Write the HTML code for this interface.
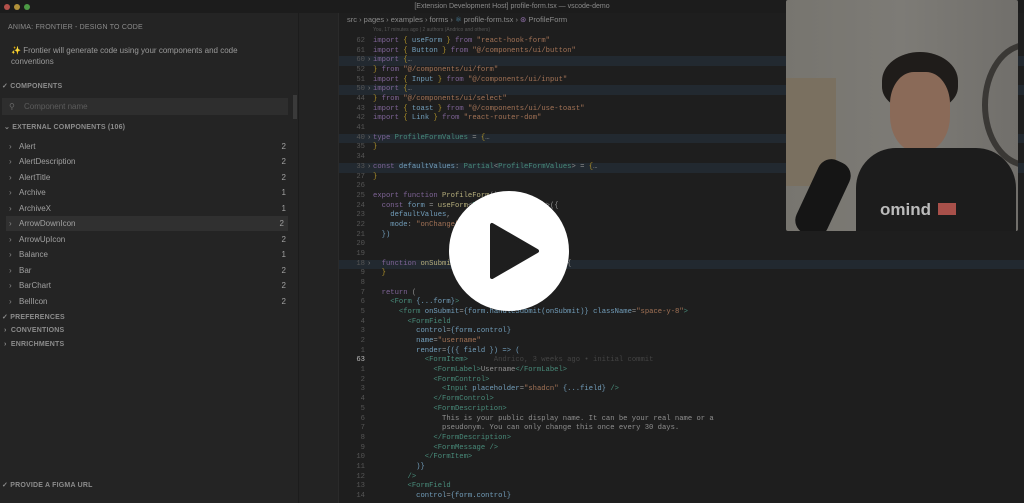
<!DOCTYPE html>
<html><head><meta charset="utf-8"><style>
*{margin:0;padding:0;box-sizing:border-box}
body{width:1024px;height:503px;overflow:hidden;background:#202020;font-family:"Liberation Sans",sans-serif;position:relative}
.title{position:absolute;left:0;top:0;width:1024px;height:13px;background:#1c1c1c;color:#8a8a8a;font-size:7px;text-align:center;line-height:13px}
.dot{position:absolute;top:4px;width:6px;height:6px;border-radius:50%}
.side{position:absolute;left:0;top:13px;width:298px;height:490px;background:#242424;color:#a0a0a0;font-size:8px}
.gap{position:absolute;left:298px;top:13px;width:40px;height:490px;background:#232323;border-left:1px solid #1c1c1c}
.ed{position:absolute;left:338px;top:13px;width:686px;height:490px;background:#1e1e1e;border-left:1px solid #2a2a2a}
.hdr{position:absolute;left:8px;font-size:7px;font-weight:bold;color:#8c8c8c;letter-spacing:.2px}
.row{position:absolute;left:0;width:290px;height:15px;line-height:15px;font-size:8px;color:#a0a0a0}
.row .c{position:absolute;left:9px;color:#888}
.row .n{position:absolute;left:19px}
.row .k{position:absolute;right:4px}
.code{position:absolute;left:0;top:0;font-family:"Liberation Mono",monospace;font-size:7.2px;white-space:pre}
.ln{position:absolute;width:686px;height:9.7px;line-height:9.7px}
.ln .no{position:absolute;left:0;width:26px;text-align:right;color:#555}
.ln .tx{position:absolute;left:34px;color:#8f8f8f}
.hl{background:#222930}
.kw{color:#7f6497}.fn{color:#b5ae7c}.st{color:#a37356}.ty{color:#488b7a}.vr{color:#729ebb}.br{color:#b39429}.tg{color:#488b7a}.at{color:#729ebb}
</style></head><body>
<div class="title">[Extension Development Host] profile-form.tsx — vscode-demo</div>
<div class="dot" style="left:4px;background:#b2504a"></div>
<div class="dot" style="left:14px;background:#b1913a"></div>
<div class="dot" style="left:24px;background:#4c9a45"></div>

<div class="side">
<div class="hdr" style="top:11px;font-weight:normal">ANIMA: FRONTIER - DESIGN TO CODE</div>
<div style="position:absolute;left:11px;top:32px;font-size:8px;color:#9a9a9a;line-height:11px;width:270px"><span style="color:#c9a52c">✨</span> Frontier will generate code using your components and code conventions</div>
<div class="hdr" style="top:69px;left:2px">✓ COMPONENTS</div>
<div style="position:absolute;left:2px;top:85px;width:286px;height:17px;background:#2e2e2e;color:#5c5c5c;font-size:8px;line-height:17px;padding-left:22px">Component name<span style="position:absolute;left:7px;top:0;color:#666">⚲</span></div>
<div style="position:absolute;left:293px;top:82px;width:4px;height:24px;background:#3a3a3a"></div>
<div class="hdr" style="top:110px;left:4px">⌄ EXTERNAL COMPONENTS (106)</div>
<div class="row" style="top:126px"><span class="c">›</span><span class="n">Alert</span><span class="k">2</span></div>
<div class="row" style="top:141px"><span class="c">›</span><span class="n">AlertDescription</span><span class="k">2</span></div>
<div class="row" style="top:157px"><span class="c">›</span><span class="n">AlertTitle</span><span class="k">2</span></div>
<div class="row" style="top:172px"><span class="c">›</span><span class="n">Archive</span><span class="k">1</span></div>
<div class="row" style="top:188px"><span class="c">›</span><span class="n">ArchiveX</span><span class="k">1</span></div>
<div class="row" style="top:203px;background:#303030;left:6px;width:282px"><span class="c" style="left:3px">›</span><span class="n" style="left:13px">ArrowDownIcon</span><span class="k">2</span></div>
<div class="row" style="top:219px"><span class="c">›</span><span class="n">ArrowUpIcon</span><span class="k">2</span></div>
<div class="row" style="top:234px"><span class="c">›</span><span class="n">Balance</span><span class="k">1</span></div>
<div class="row" style="top:250px"><span class="c">›</span><span class="n">Bar</span><span class="k">2</span></div>
<div class="row" style="top:265px"><span class="c">›</span><span class="n">BarChart</span><span class="k">2</span></div>
<div class="row" style="top:281px"><span class="c">›</span><span class="n">BellIcon</span><span class="k">2</span></div>
<div class="hdr" style="top:300px;left:2px">✓ PREFERENCES</div>
<div class="hdr" style="top:314px;left:4px">›&nbsp; CONVENTIONS</div>
<div class="hdr" style="top:328px;left:4px">›&nbsp; ENRICHMENTS</div>
<div class="hdr" style="top:468px;left:2px">✓ PROVIDE A FIGMA URL</div>
</div>
<div class="gap"></div>

<div class="ed">
<div style="position:absolute;left:8px;top:2px;font-size:7.5px;color:#8a8a8a">src › pages › examples › forms › <span style="color:#4f8fb0">⚛</span> profile-form.tsx › <span style="color:#8f6fa8">⊛</span> ProfileForm</div>
<div style="position:absolute;left:34px;top:14px;font-size:5px;color:#555">You, 17 minutes ago | 2 authors (Andrico and others)</div>
<div class="code" id="c"></div>
</div>

<script>
var L=[
["62",'<span class="kw">import</span> <span class="br">{</span> <span class="vr">useForm</span> <span class="br">}</span> <span class="kw">from</span> <span class="st">"react-hook-form"</span>'],
["61",'<span class="kw">import</span> <span class="br">{</span> <span class="vr">Button</span> <span class="br">}</span> <span class="kw">from</span> <span class="st">"@/components/ui/button"</span>'],
["60",'<span class="kw">import</span> <span class="br">{</span>…',1],
["52",'<span class="br">}</span> <span class="kw">from</span> <span class="st">"@/components/ui/form"</span>'],
["51",'<span class="kw">import</span> <span class="br">{</span> <span class="vr">Input</span> <span class="br">}</span> <span class="kw">from</span> <span class="st">"@/components/ui/input"</span>'],
["50",'<span class="kw">import</span> <span class="br">{</span>…',1],
["44",'<span class="br">}</span> <span class="kw">from</span> <span class="st">"@/components/ui/select"</span>'],
["43",'<span class="kw">import</span> <span class="br">{</span> <span class="vr">toast</span> <span class="br">}</span> <span class="kw">from</span> <span class="st">"@/components/ui/use-toast"</span>'],
["42",'<span class="kw">import</span> <span class="br">{</span> <span class="vr">Link</span> <span class="br">}</span> <span class="kw">from</span> <span class="st">"react-router-dom"</span>'],
["41",''],
["40",'<span class="kw">type</span> <span class="ty">ProfileFormValues</span> = <span class="br">{</span>…',1],
["35",'<span class="br">}</span>'],
["34",''],
["33",'<span class="kw">const</span> <span class="vr">defaultValues</span>: <span class="ty">Partial</span>&lt;<span class="ty">ProfileFormValues</span>&gt; = <span class="br">{</span>…',1],
["27",'<span class="br">}</span>'],
["26",''],
["25",'<span class="kw">export function</span> <span class="fn">ProfileForm</span>() <span class="br">{</span>'],
["24",'  <span class="kw">const</span> <span class="vr">form</span> = <span class="fn">useForm</span>&lt;<span class="ty">ProfileFormValues</span>&gt;({'],
["23",'    <span class="vr">defaultValues</span>,'],
["22",'    <span class="vr">mode</span>: <span class="st">"onChange"</span>,'],
["21",'  <span class="vr">})</span>'],
["20",''],
["19",''],
["18",'  <span class="kw">function</span> <span class="fn">onSubmit</span>(data: ProfileFormValues) {',1],
["9",'  <span class="br">}</span>'],
["8",''],
["7",'  <span class="kw">return</span> ('],
["6",'    <span class="tg">&lt;Form</span> <span class="vr">{...form}</span><span class="tg">&gt;</span>'],
["5",'      <span class="tg">&lt;form</span> <span class="at">onSubmit</span>=<span class="vr">{form.handleSubmit(onSubmit)}</span> <span class="at">className</span>=<span class="st">"space-y-8"</span><span class="tg">&gt;</span>'],
["4",'        <span class="tg">&lt;FormField</span>'],
["3",'          <span class="at">control</span>=<span class="vr">{form.control}</span>'],
["2",'          <span class="at">name</span>=<span class="st">"username"</span>'],
["1",'          <span class="at">render</span>=<span class="vr">{({ field }) =&gt; (</span>'],
["63",'            <span class="tg">&lt;FormItem&gt;</span>      <span style="color:#444">Andrico, 3 weeks ago • initial commit</span>'],
["1",'              <span class="tg">&lt;FormLabel&gt;</span>Username<span class="tg">&lt;/FormLabel&gt;</span>'],
["2",'              <span class="tg">&lt;FormControl&gt;</span>'],
["3",'                <span class="tg">&lt;Input</span> <span class="at">placeholder</span>=<span class="st">"shadcn"</span> <span class="vr">{...field}</span> <span class="tg">/&gt;</span>'],
["4",'              <span class="tg">&lt;/FormControl&gt;</span>'],
["5",'              <span class="tg">&lt;FormDescription&gt;</span>'],
["6",'                This is your public display name. It can be your real name or a'],
["7",'                pseudonym. You can only change this once every 30 days.'],
["8",'              <span class="tg">&lt;/FormDescription&gt;</span>'],
["9",'              <span class="tg">&lt;FormMessage</span> <span class="tg">/&gt;</span>'],
["10",'            <span class="tg">&lt;/FormItem&gt;</span>'],
["11",'          <span class="vr">)}</span>'],
["12",'        <span class="tg">/&gt;</span>'],
["13",'        <span class="tg">&lt;FormField</span>'],
["14",'          <span class="at">control</span>=<span class="vr">{form.control}</span>']
];
var h='';
for(var i=0;i<L.length;i++){var t=24+i*9.68;
h+='<div class="ln'+(L[i][2]?' hl':'')+'" style="top:'+t+'px"><span class="no"'+(L[i][0]=="63"&&i>30?' style="color:#bbb"':'')+'>'+L[i][0]+'</span>'+(L[i][2]?'<span style="position:absolute;left:28px;color:#777">›</span>':'')+'<span class="tx">'+L[i][1]+'</span></div>';}
document.getElementById('c').innerHTML=h;
</script>

<div style="position:absolute;left:786px;top:0;width:232px;height:231px;background:linear-gradient(90deg,#77756f 0%,#7d7b76 50%,#716f6b 100%);overflow:hidden;border-radius:2px">
 <div style="position:absolute;left:0;top:78px;width:50px;height:108px;background:#7a7060"></div>
 <div style="position:absolute;left:196px;top:42px;width:90px;height:126px;border-radius:50%;border:6px solid #3a3835"></div>
 <div style="position:absolute;left:96px;top:52px;width:76px;height:58px;border-radius:50% 50% 40% 40%;background:#1f1c1a"></div>
 <div style="position:absolute;left:104px;top:72px;width:60px;height:80px;border-radius:40% 40% 45% 45%;background:#8a6a58"></div>
 <div style="position:absolute;left:70px;top:148px;width:160px;height:90px;border-radius:40px 40px 0 0;background:#1c1c1c"></div>
 <div style="position:absolute;left:20px;top:158px;width:34px;height:80px;background:#151515;transform:rotate(25deg);border-radius:14px"></div>
 <div style="position:absolute;left:94px;top:200px;font-size:17px;font-weight:bold;color:#bbb">omind</div>
 <div style="position:absolute;left:152px;top:203px;width:18px;height:12px;background:#a8504a"></div>
</div>

<div style="position:absolute;left:449px;top:191px;width:120px;height:120px;border-radius:50%;background:#fff"></div>
<svg style="position:absolute;left:449px;top:191px" width="120" height="120"><path d="M43 34 L43 86 L88 60 Z" fill="#1e1e1e" stroke="#1e1e1e" stroke-width="4" stroke-linejoin="round"/></svg>
</body></html>
